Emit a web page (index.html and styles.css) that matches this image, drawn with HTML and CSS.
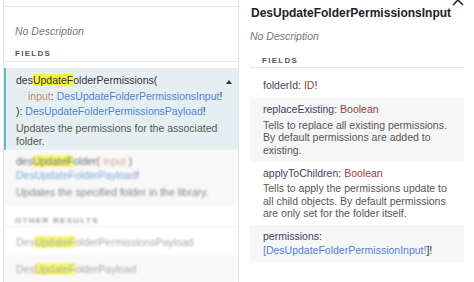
FILE: index.html
```html
<!DOCTYPE html>
<html lang="en">
<head>
<meta charset="utf-8">
<title>Docs explorer</title>
<link rel="stylesheet" href="styles.css">
</head>
<body>
<div class="app">
  <section class="explorer">
    <div class="search"></div>
    <p class="nodesc">No Description</p>
    <h4 class="section-title">FIELDS</h4>
    <div class="item item--active">
      <div class="sig-first"><span>des<mark>UpdateF</mark>olderPermissions(</span><span class="caret"></span></div>
      <div class="sig sig--arg"><span class="arg">input</span>: <span class="type">DesUpdateFolderPermissionsInput</span>!</div>
      <div class="sig">): <span class="type">DesUpdateFolderPermissionsPayload</span>!</div>
      <p class="desc">Updates the permissions for the associated folder.</p>
    </div>
    <div class="faded">
      <div class="item item--alt">
        <div class="sig sig--tight">des<mark>UpdateF</mark>older( <span class="arg">input</span> )</div>
        <div class="sig sig--tight"><span class="type">DesUpdateFolderPayload</span>!</div>
        <p class="desc desc--second">Updates the specified folder in the library.</p>
      </div>
      <h4 class="section-title section-title--other">OTHER RESULTS</h4>
      <div class="result">Des<mark>UpdateF</mark>olderPermissionsPayload</div>
      <div class="result result--alt">Des<mark>UpdateF</mark>olderPayload</div>
    </div>
  </section>
  <section class="doc">
    <button class="close" aria-label="Close">
      <svg width="12" height="12" viewBox="0 0 12 12"><path d="M1 1 L11 11 M11 1 L1 11" stroke="#222" stroke-width="1.5" fill="none"/></svg>
    </button>
    <h2 class="doc-title">DesUpdateFolderPermissionsInput</h2>
    <p class="nodesc nodesc--doc">No Description</p>
    <h4 class="section-title section-title--doc">FIELDS</h4>
    <div class="fields">
      <div class="field">
        <div class="field-name"><span class="fname">folderId</span>: <span class="scalar">ID</span>!</div>
      </div>
      <div class="field field--alt">
        <div class="field-name"><span class="fname">replaceExisting</span>: <span class="scalar">Boolean</span></div>
        <p class="field-desc">Tells to replace all existing permissions. By default permissions are added to existing.</p>
      </div>
      <div class="field">
        <div class="field-name"><span class="fname">applyToChildren</span>: <span class="scalar">Boolean</span></div>
        <p class="field-desc">Tells to apply the permissions update to all child objects. By default permissions are only set for the folder itself.</p>
      </div>
      <div class="field field--alt">
        <div class="field-name"><span class="fname">permissions</span>: <span class="type">[DesUpdateFolderPermissionInput!</span>]!</div>
      </div>
    </div>
  </section>
</div>
</body>
</html>
```
FILE: styles.css
```css
html, body {
  margin: 0;
  padding: 0;
  background: #fff;
}
body {
  width: 474px;
  height: 282px;
  overflow: hidden;
  font-family: "Liberation Sans", Arial, sans-serif;
  font-size: 10.5px;
  color: #333;
}
.app {
  display: flex;
  height: 282px;
}
mark {
  background: #f5f53c;
  color: inherit;
}

/* left explorer */
.explorer {
  flex: none;
  width: 236px;
  margin-left: 3px;
  box-sizing: border-box;
  border-left: 1px solid #e4e4e4;
  border-right: 1px solid #e4e4e4;
  height: 282px;
  overflow: hidden;
}
.search {
  height: 6px;
  border-bottom: 1px solid #e4e4e4;
}
.nodesc {
  margin: 18px 0 0;
  padding-left: 11px;
  font-style: italic;
  color: #777;
  line-height: 13px;
}
.section-title {
  margin: 11px 0 0;
  padding: 0 0 2px 11px;
  font-size: 8px;
  line-height: 10px;
  letter-spacing: 1.3px;
  font-weight: bold;
  color: #555;
  border-bottom: 1px solid #e6e6e6;
}
.item {
  padding: 5px 6px 3px 10px;
}
.item--active {
  margin-top: 6px;
  background: #e5eff1;
  border-left: 2px solid #5bbcd6;
}
.sig-first {
  display: flex;
  justify-content: space-between;
  align-items: center;
  line-height: 15.5px;
  white-space: nowrap;
}
.caret {
  width: 0;
  height: 0;
  margin-top: 2px;
  border-left: 3px solid transparent;
  border-right: 3px solid transparent;
  border-bottom: 4px solid #333;
}
.sig {
  line-height: 15.5px;
  white-space: nowrap;
}
.sig--arg {
  padding-left: 12px;
}
.arg {
  color: #c98b5e;
}
.type {
  color: #4f83d1;
}
.desc {
  margin: 2.5px 0 0;
  line-height: 12.5px;
  color: #555;
}

.faded {
  filter: blur(0.9px);
  opacity: 0.72;
}
.item--alt {
  background: #f6f6f6;
  padding: 5px 6px 7px 12px;
}
.sig--tight {
  line-height: 13.5px;
}
.desc--second {
  margin-top: 3.5px;
}
.section-title--other {
  margin-top: 0;
  padding-top: 11px;
  padding-bottom: 0;
  color: #777;
}
.result {
  padding: 9px 12px 6px;
  line-height: 13px;
  color: #888;
}
.result--alt {
  background: #f6f6f6;
  padding-top: 8px;
}

/* right doc panel */
.doc {
  flex: 1;
  position: relative;
  padding: 5px 10px 0 11px;
  min-width: 0;
}
.close {
  position: absolute;
  top: -6px;
  left: 213px;
  width: 12px;
  height: 12px;
  padding: 0;
  border: 0;
  background: none;
  display: block;
}
.close svg {
  display: block;
}
.doc-title {
  margin: 0;
  padding-left: 1px;
  font-size: 12px;
  line-height: 16px;
  font-weight: bold;
  color: #222;
}
.nodesc--doc {
  margin-top: 9px;
  padding-left: 0;
}
.section-title--doc {
  margin-top: 13px;
  padding-left: 12px;
  padding-bottom: 1px;
}
.fields {
  margin-top: 6px;
}
.field {
  padding: 5.3px 10px 5.3px 13px;
}
.field--alt {
  background: #f6f6f6;
}
.field-name {
  line-height: 13.4px;
  color: #333;
}
.fname {
  color: #3d4460;
}
.scalar {
  color: #93403f;
}
.field-desc {
  margin: 2px 0 0;
  line-height: 12.5px;
  color: #555;
}
```
